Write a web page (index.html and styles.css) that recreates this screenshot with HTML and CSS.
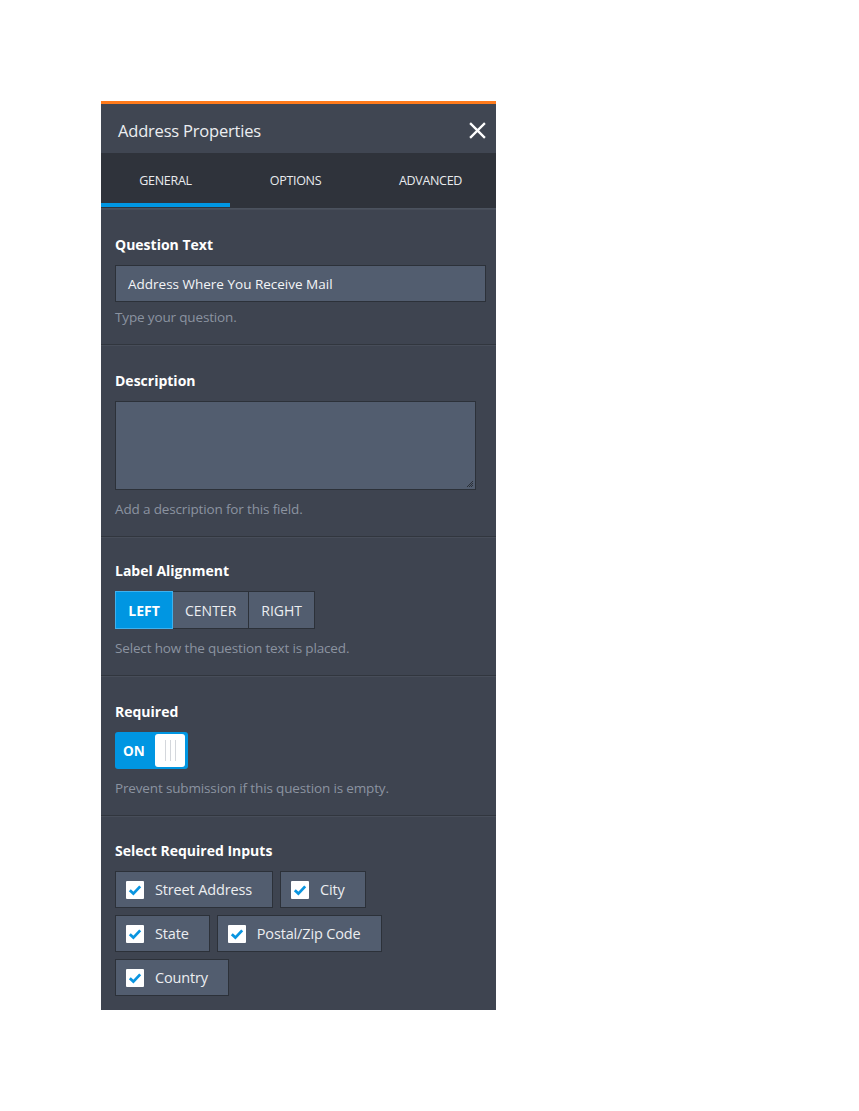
FILE: index.html
```html
<!DOCTYPE html>
<html>
<head>
  <title>Address Properties</title>
  <link rel="stylesheet" href="styles.css">
</head>
<body>
  <div class="panel">
    <div class="panel-header">
      <div class="panel-title">Address Properties</div>
      <svg class="close-icon" viewBox="0 0 18 18" fill="none" xmlns="http://www.w3.org/2000/svg">
        <path d="M2 2L16 16M16 2L2 16" stroke="#ffffff" stroke-width="2.4" stroke-linecap="square"/>
      </svg>
    </div>

    <div class="tabs">
      <div class="tab active">GENERAL</div>
      <div class="tab">OPTIONS</div>
      <div class="tab">ADVANCED</div>
    </div>

    <div class="section">
      <label class="field-label">Question Text</label>
      <div class="text-input">Address Where You Receive Mail</div>
      <div class="help">Type your question.</div>
    </div>

    <div class="section">
      <label class="field-label">Description</label>
      <div class="textarea">
        <svg class="grip" viewBox="0 0 8 8" xmlns="http://www.w3.org/2000/svg">
          <path d="M7 1L1 7M7 3L3 7M7 5L5 7" stroke="#2b3038" stroke-width="1"/>
        </svg>
      </div>
      <div class="help help-spaced">Add a description for this field.</div>
    </div>

    <div class="section tight">
      <label class="field-label">Label Alignment</label>
      <div class="segmented">
        <div class="seg active">LEFT</div>
        <div class="seg">CENTER</div>
        <div class="seg">RIGHT</div>
      </div>
      <div class="help help-spaced">Select how the question text is placed.</div>
    </div>

    <div class="section">
      <label class="field-label">Required</label>
      <div class="toggle">
        <span class="toggle-text">ON</span>
        <span class="knob"><i></i><i></i><i></i></span>
      </div>
      <div class="help help-spaced">Prevent submission if this question is empty.</div>
    </div>

    <div class="section last">
      <label class="field-label">Select Required Inputs</label>
      <div class="checks">
        <div class="check"><span class="box"><svg viewBox="0 0 18 18"><path d="M3.8 9.2L7.4 12.6L14.2 5.4" stroke="#0a95e0" stroke-width="2.8" fill="none"/></svg></span>Street Address</div>
        <div class="check"><span class="box"><svg viewBox="0 0 18 18"><path d="M3.8 9.2L7.4 12.6L14.2 5.4" stroke="#0a95e0" stroke-width="2.8" fill="none"/></svg></span>City</div>
      </div>
      <div class="checks">
        <div class="check"><span class="box"><svg viewBox="0 0 18 18"><path d="M3.8 9.2L7.4 12.6L14.2 5.4" stroke="#0a95e0" stroke-width="2.8" fill="none"/></svg></span>State</div>
        <div class="check"><span class="box"><svg viewBox="0 0 18 18"><path d="M3.8 9.2L7.4 12.6L14.2 5.4" stroke="#0a95e0" stroke-width="2.8" fill="none"/></svg></span>Postal/Zip Code</div>
      </div>
      <div class="checks">
        <div class="check"><span class="box"><svg viewBox="0 0 18 18"><path d="M3.8 9.2L7.4 12.6L14.2 5.4" stroke="#0a95e0" stroke-width="2.8" fill="none"/></svg></span>Country</div>
      </div>
    </div>
  </div>
</body>
</html>
```

FILE: styles.css
```css
:root {
  --orange: #ff7b1c;
  --blue: #0096e2;
  --panel-bg: #3e4450;
  --header-bg: #404652;
  --tabs-bg: #2f333b;
  --input-bg: #525d6f;
  --input-border: #2c3139;
  --text: #ffffff;
  --help: #8b93a0;
}

* {
  box-sizing: border-box;
}

body {
  margin: 0;
  background: #ffffff;
  font-family: "Open Sans", "Noto Sans", sans-serif;
}

.panel {
  width: 395px;
  margin: 101px 0 0 101px;
  background: var(--panel-bg);
  color: var(--text);
}

.panel-header {
  display: flex;
  align-items: center;
  justify-content: space-between;
  height: 52px;
  padding: 4px 10px 0 17px;
  border-top: 3px solid var(--orange);
  background: var(--header-bg);
}

.panel-title {
  font-size: 16.5px;
  color: #eceef1;
  letter-spacing: -0.2px;
}

.close-icon {
  width: 17px;
  height: 17px;
}

/* tabs */
.tabs {
  display: flex;
  height: 56px;
  padding-top: 4px;
  background: var(--tabs-bg);
  border-bottom: 1px solid #4b525e;
}

.tab {
  flex: 1;
  display: flex;
  align-items: center;
  justify-content: center;
  font-size: 12.5px;
  letter-spacing: -0.3px;
  color: #e9ebee;
  border-bottom: 4px solid transparent;
  margin-bottom: 1px;
}

.tab:nth-child(2) {
  padding-right: 4px;
}

.tab.active {
  border-bottom-color: var(--blue);
  flex: 0 0 129px;
}

/* sections */
.section {
  padding: 25px 10px 18px 14px;
  border-top: 1px solid #474d59;
  border-bottom: 1px solid #31363e;
}

.section:first-of-type {
  border-top: none;
}

.section.tight {
  padding-top: 23px;
}

.section.last {
  border-bottom: none;
  padding-top: 24px;
  padding-bottom: 7px;
}

.field-label {
  display: block;
  font-size: 14px;
  font-weight: 700;
  line-height: 20px;
  margin-bottom: 10px;
}

.text-input {
  height: 37px;
  padding: 0 12px;
  display: flex;
  align-items: center;
  background: var(--input-bg);
  border: 1px solid var(--input-border);
  font-size: 13.5px;
  letter-spacing: 0;
  color: #f4f5f7;
}

.textarea {
  position: relative;
  width: 361px;
  height: 89px;
  background: var(--input-bg);
  border: 1px solid var(--input-border);
}

.grip {
  position: absolute;
  right: 1px;
  bottom: 1px;
  width: 8px;
  height: 8px;
}

.help {
  margin-top: 6px;
  font-size: 13.5px;
  line-height: 18px;
  letter-spacing: -0.15px;
  color: var(--help);
}

.help-spaced {
  margin-top: 10px;
}

/* segmented buttons */
.segmented {
  display: flex;
}

.seg {
  height: 38px;
  padding: 0 12px;
  display: flex;
  align-items: center;
  font-size: 14px;
  color: #eceef1;
  background: var(--input-bg);
  border: 1px solid var(--input-border);
  border-left: none;
}

.seg.active {
  width: 58px;
  justify-content: center;
  font-weight: 700;
  color: #ffffff;
  background: var(--blue);
  border: 1px solid #3fb1ee;
}

/* toggle */
.toggle {
  width: 73px;
  height: 37px;
  display: flex;
  align-items: center;
  justify-content: space-between;
  padding: 0 3px 0 8px;
  background: var(--blue);
  border-radius: 3px;
}

.toggle-text {
  font-size: 13.5px;
  font-weight: 700;
}

.knob {
  width: 30px;
  height: 33px;
  display: flex;
  justify-content: center;
  gap: 4px;
  padding: 6px 0;
  background: #ffffff;
  border-radius: 3px;
}

.knob i {
  width: 1px;
  background: #d4d7dc;
}

/* checkboxes */
.checks {
  display: flex;
  gap: 7px;
  margin-bottom: 7px;
}

.check {
  height: 37px;
  display: flex;
  align-items: center;
  gap: 11px;
  padding: 0 20px 0 10px;
  background: var(--input-bg);
  border: 1px solid var(--input-border);
  font-size: 14.5px;
  letter-spacing: -0.15px;
  color: #eceef1;
}

.box {
  width: 18px;
  height: 18px;
  background: #ffffff;
  border-radius: 1px;
}

.box svg {
  display: block;
  width: 18px;
  height: 18px;
}
```
